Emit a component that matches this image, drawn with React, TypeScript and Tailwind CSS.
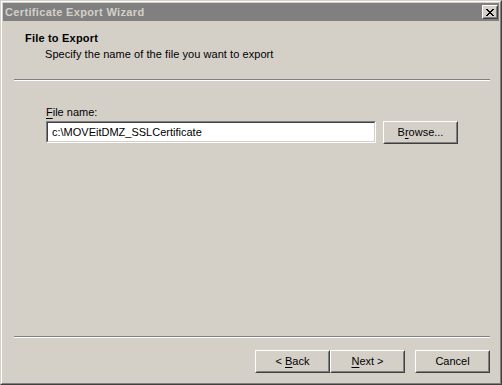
import React from 'react';

const FONT = "font-['Tahoma','Liberation_Sans',Arial,sans-serif]";

// classic raised 3D push button
const Button = ({ children, className = '' }: { children: React.ReactNode; className?: string }) => (
  <div
    className={`h-[23px] w-[75px] border border-t-white border-l-white border-r-[#404040] border-b-[#404040] ${className}`}
  >
    <div className="flex h-full w-full items-center justify-center whitespace-pre border border-t-[#d4d0c8] border-l-[#d4d0c8] border-r-[#808080] border-b-[#808080] text-[11px] leading-[13px] text-black">
      {children}
    </div>
  </div>
);

const Separator = () => (
  <div className="ml-[11px] mr-[9px] h-[2px] border-t border-t-[#808080] border-b border-b-white" />
);

const Key = ({ children }: { children: React.ReactNode }) => (
  <span className="underline underline-offset-2">{children}</span>
);

export default function App() {
  return (
    <div className={`${FONT} h-[385px] w-[502px] bg-[#d4d0c8] text-black`}>
      <div className="h-full w-full border border-t-[#d4d0c8] border-l-[#d4d0c8] border-r-[#404040] border-b-[#404040]">
        <div className="flex h-full w-full flex-col border border-t-white border-l-white border-r-[#808080] border-b-[#808080] p-px">
          {/* title bar */}
          <div className="flex h-[18px] items-center justify-between bg-[#808080] pl-[2px] pr-[1px]">
            <span className="text-[11px] font-bold leading-[13px] tracking-[0.35px] text-[#d4d0c8]">
              Certificate Export Wizard
            </span>
            <div className="h-[14px] w-[16px] border border-t-white border-l-white border-r-[#404040] border-b-[#404040]">
              <div className="flex h-full w-full items-center justify-center border border-t-[#d4d0c8] border-l-[#d4d0c8] border-r-[#808080] border-b-[#808080] bg-[#d4d0c8]">
                <svg width="8" height="7" viewBox="0 0 8 7" shapeRendering="crispEdges">
                  <path
                    d="M0 0h2v1h-2zM6 0h2v1h-2zM1 1h2v1h-2zM5 1h2v1h-2zM2 2h4v1h-4zM3 3h2v1h-2zM2 4h4v1h-4zM1 5h2v1h-2zM5 5h2v1h-2zM0 6h2v1h-2zM6 6h2v1h-2z"
                    fill="#000"
                  />
                </svg>
              </div>
            </div>
          </div>

          {/* header */}
          <div className="pl-[22px] pt-[11px] text-[11px] leading-[13px]">
            <p className="font-bold tracking-[0.2px]">File to Export</p>
            <p className="mt-[3px] pl-[20px] tracking-[0.06px]">Specify the name of the file you want to export</p>
          </div>
          <div className="mt-[18px]">
            <Separator />
          </div>

          {/* body */}
          <div className="pl-[43px] pt-[25px] text-[11px] leading-[13px]">
            <p>
              <Key>F</Key>ile name:
            </p>
            <div className="mt-[2px] flex items-start">
              <div className="h-[22px] w-[330px] border border-t-[#808080] border-l-[#808080] border-r-white border-b-white">
                <div className="flex h-full w-full items-center border border-t-[#404040] border-l-[#404040] border-r-[#d4d0c8] border-b-[#d4d0c8] bg-white pl-[4px]">
                  c:\MOVEitDMZ_SSLCertificate
                </div>
              </div>
              <Button className="ml-[7px]">
                B<Key>r</Key>owse...
              </Button>
            </div>
          </div>

          <div className="flex-1" />

          <Separator />
          <div className="flex justify-end pb-[9px] pr-[9px] pt-[12px]">
            <Button>
              {'< '}
              <Key>B</Key>ack
            </Button>
            <Button>
              <Key>N</Key>
              {'ext >'}
            </Button>
            <Button className="ml-[10px]">Cancel</Button>
          </div>
        </div>
      </div>
    </div>
  );
}
